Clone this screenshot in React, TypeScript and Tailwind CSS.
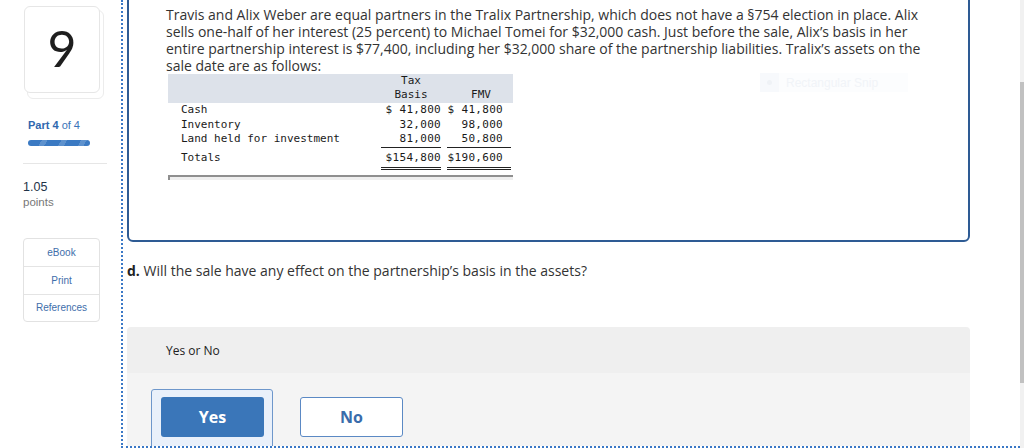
import React from "react";

const sans = { fontFamily: '"Liberation Sans", Arial, sans-serif' };
const body = { fontFamily: '"Open Sans", "Liberation Sans", sans-serif' };
const mono = { fontFamily: '"DejaVu Sans Mono", "Liberation Mono", monospace' };

function Sidebar() {
  return (
    <div className="w-[121px] shrink-0 h-[448px] flex flex-col pl-[23px] pr-[14px]" style={sans}>
      <div className="relative mt-[6px] ml-[1px] w-[78px] h-[90px]">
        <div className="absolute left-[3px] top-[4px] w-[77px] h-[89px] rounded-[6px] border border-[#ececec] bg-white" />
        <div className="absolute left-0 top-0 w-[76px] h-[87px] rounded-[6px] border border-[#e6e6e6] bg-white flex items-center justify-center">
          <span className="text-[50px] leading-none text-[#1e1e1e] -mt-[4px]" style={{ fontFamily: '"Lato", sans-serif' }}>9</span>
        </div>
      </div>
      <div className="mt-[21px] ml-[5px] text-[11px] text-[#3a73b8]">
        <span className="font-bold text-[#2f67ae]">Part 4</span> of 4
      </div>
      <div className="mt-[6px] ml-[5px] w-[62px] h-[6px] rounded-full bg-[#3b7ac3] overflow-hidden relative">
        <div className="absolute inset-0" style={{ backgroundImage: "repeating-linear-gradient(120deg, transparent 0 12px, rgba(255,255,255,0.18) 12px 17px)" }} />
      </div>
      <div className="mt-[17px] h-px bg-[#e6e6e6] w-[84px]" />
      <div className="mt-[16px] text-[12.5px] leading-[15px] text-[#1f3348]">1.05</div>
      <div className="text-[11.5px] leading-[15px] text-[#777]">points</div>
      <div className="mt-[28px] w-[77px] rounded-[4px] border border-[#e2e2e2] text-[10px] text-[#3e6eaa] flex flex-col">
        <div className="h-[28px] flex items-center justify-center border-b border-[#e4e4e4]">eBook</div>
        <div className="h-[28px] flex items-center justify-center border-b border-[#e4e4e4]">Print</div>
        <div className="h-[26px] flex items-center justify-center">References</div>
      </div>
    </div>
  );
}

const rows = [
  ["Cash", "$ 41,800", "$ 41,800"],
  ["Inventory", "32,000", "98,000"],
  ["Land held for investment", "81,000", "50,800"],
];

function AssetTable() {
  return (
    <div className="ml-[2px] w-[345px]" style={mono}>
      <div className="bg-[#dde2ea] h-[29px] text-[11px] leading-[14px] text-[#1a1a1a]">
        <div className="flex">
          <div className="w-[213px]" />
          <div className="w-[60px] text-center">Tax</div>
        </div>
        <div className="flex">
          <div className="w-[213px]" />
          <div className="w-[60px] text-center">Basis</div>
          <div className="w-[72px] text-center pl-[8px]">FMV</div>
        </div>
      </div>
      <div className="text-[11px] leading-[14.5px] text-[#1a1a1a]">
        {rows.map((r, i) => (
          <div key={r[0]} className="flex">
            <div className="w-[213px] pl-[13px]">{r[0]}</div>
            <div className={`w-[60px] text-right tracking-[0.3px] ${i === 2 ? "border-b border-[#222]" : ""}`}>{r[1]}</div>
            <div className="w-[6px]" />
            <div className={`w-[64px] text-right pr-[8px] tracking-[0.3px] ${i === 2 ? "border-b border-[#222]" : ""}`}>{r[2]}</div>
          </div>
        ))}
        <div className="flex pt-[3px]">
          <div className="w-[213px] pl-[13px]">Totals</div>
          <div className="w-[60px] text-right tracking-[0.3px] border-b-[3px] border-double border-[#222] pb-[2px]">$154,800</div>
          <div className="w-[6px]" />
          <div className="w-[64px] text-right pr-[8px] tracking-[0.3px] border-b-[3px] border-double border-[#222] pb-[2px]">$190,600</div>
        </div>
      </div>
      <div className="mt-[5px] h-[5px] border-t-2 border-l-2 border-[#8f8f8f] bg-[#efefef]" />
    </div>
  );
}

function Main() {
  return (
    <div className="flex-1 h-[448px] border-l-2 border-b-2 border-dotted border-[#3a78c6] overflow-hidden">
      <div className="ml-[4px] w-[843px] -mt-[10px] h-[252px] border-2 border-[#2e5b94] rounded-[6px] pl-[37px] pt-[14px] relative">
        <p className="text-[14px] leading-[17px] text-[#333] whitespace-nowrap" style={body}>
          Travis and Alix Weber are equal partners in the Tralix Partnership, which does not have a §754 election in place. Alix
          <br />
          sells one-half of her interest (25 percent) to Michael Tomei for $32,000 cash. Just before the sale, Alix’s basis in her
          <br />
          entire partnership interest is $77,400, including her $32,000 share of the partnership liabilities. Tralix’s assets on the
          <br />
          sale date are as follows:
        </p>
        <AssetTable />
        <div className="absolute left-[631px] top-[81px] w-[148px] h-[19px] bg-[#fcfdfe] flex items-center text-[12px] text-[#f1f4f8]" style={sans}>
          <span className="w-[19px] h-full bg-[#f7f9fc] flex items-center justify-center">
            <span className="w-[5px] h-[5px] rounded-full bg-[#eff2f6]" />
          </span>
          <span className="ml-[7px]">Rectangular Snip</span>
        </div>
      </div>
      <div className="ml-[4px] mt-[20px] text-[14px] leading-[17px] text-[#333]" style={body}>
        <span className="font-bold text-[#222]">d.</span> Will the sale have any effect on the partnership’s basis in the assets?
      </div>
      <div className="ml-[4px] mt-[48px] w-[843px] rounded-t-[4px] overflow-hidden" style={body}>
        <div className="h-[46px] bg-[#efefef] pl-[39px] flex items-center text-[12px] text-[#222] pt-[2px]">Yes or No</div>
        <div className="h-[75px] bg-[#f4f4f4] pl-[24px] pt-[16px] flex items-start gap-[27px]">
          <div className="w-[122px] h-[62px] rounded-[3px] border border-[#6e97cb] bg-[#e9f0fa] pt-[7px] pl-[9px]">
            <div className="w-[103px] h-[40px] rounded-[3px] bg-[#3a76b9] flex items-center justify-center text-white font-bold text-[16px]">Yes</div>
          </div>
          <div className="mt-[8px] w-[103px] h-[40px] rounded-[3px] border border-[#5b89c4] bg-white flex items-center justify-center text-[#3a6cab] font-bold text-[16px]">No</div>
        </div>
      </div>
    </div>
  );
}

export default function App() {
  return (
    <div className="w-[1024px] h-[448px] overflow-hidden bg-white flex">
      <Sidebar />
      <Main />
      <div className="w-[4px] h-[448px] bg-[#f1f1f1] pt-[82px] shrink-0">
        <div className="h-[301px] bg-[#c1c1c1]" />
      </div>
    </div>
  );
}
